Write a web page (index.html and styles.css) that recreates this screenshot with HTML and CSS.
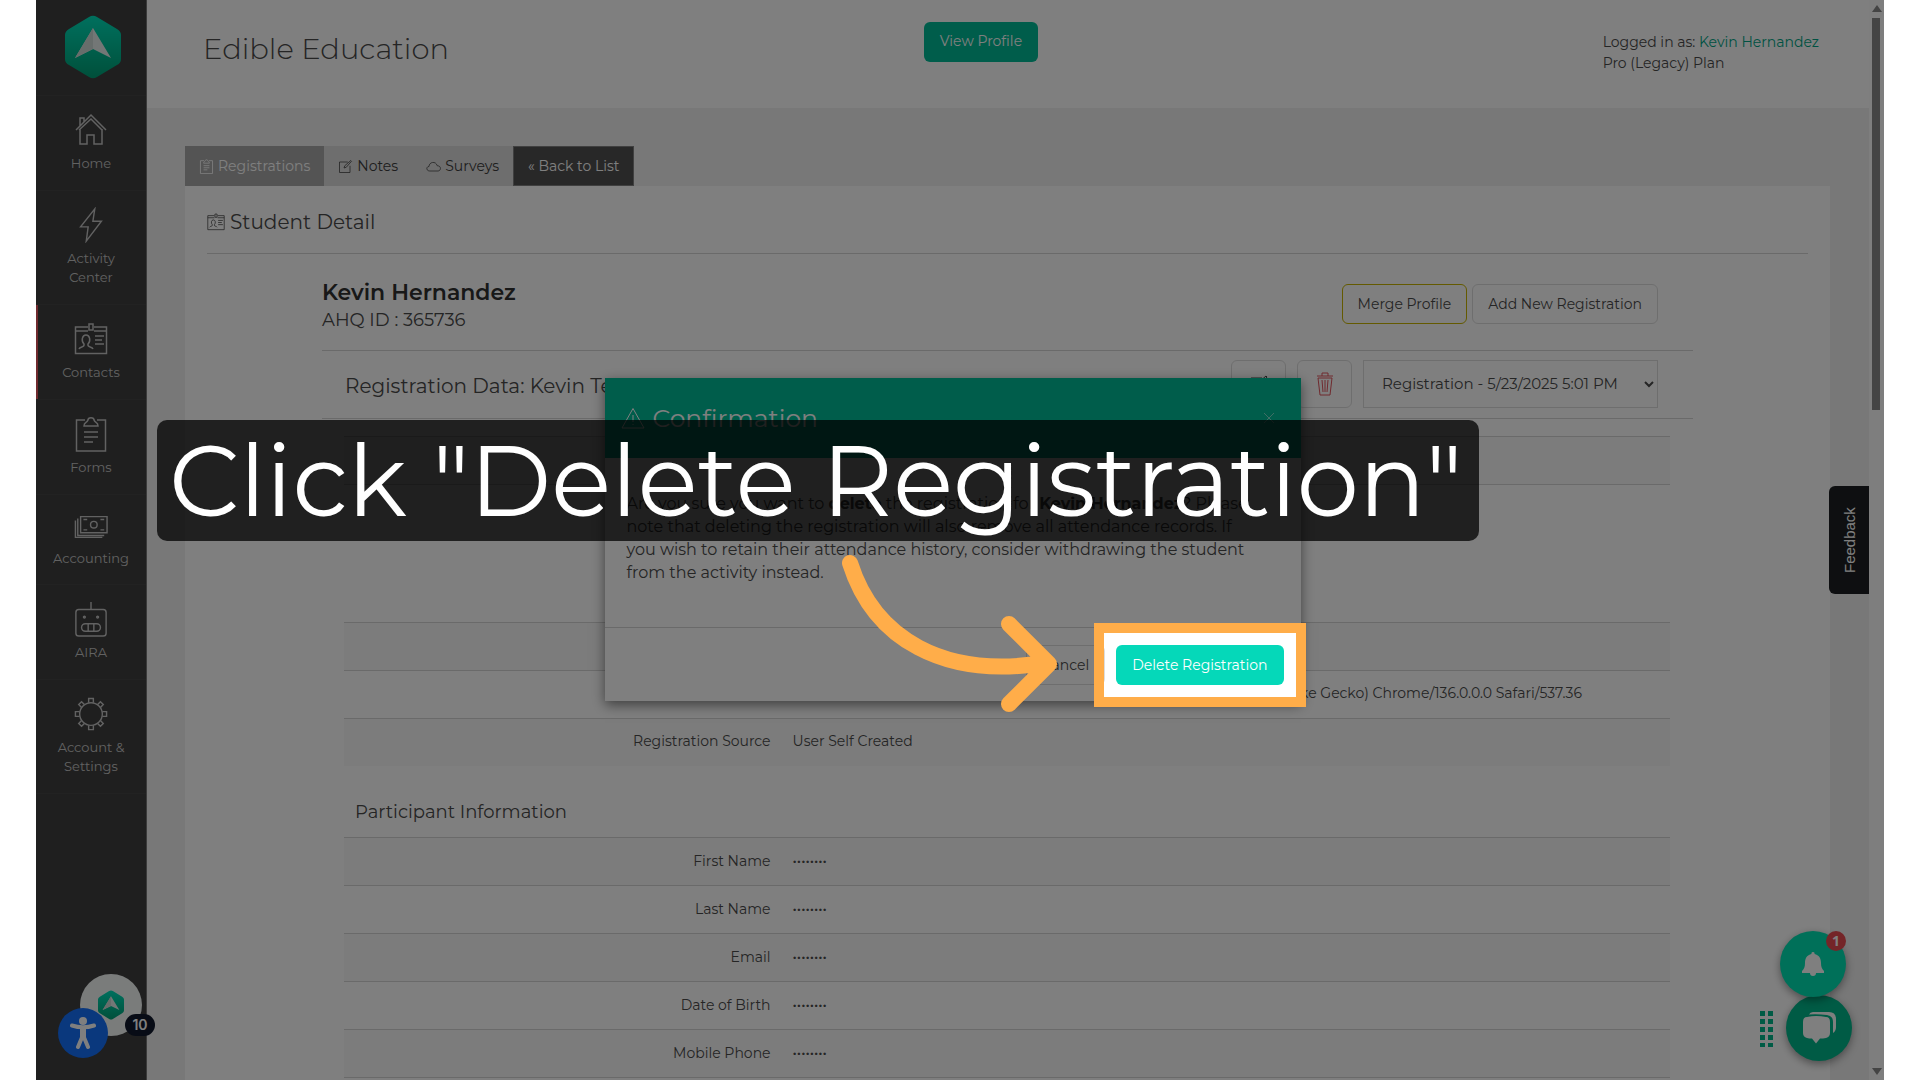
FILE: index.html
```html
<!DOCTYPE html>
<html lang="en">
<head>
    <meta charset="UTF-8">
    <meta name="viewport" content="width=device-width, initial-scale=1.0">
    <title>Edible Education - Student Detail</title>
    <link rel="stylesheet" href="styles.css">
</head>
<body>
<!-- Shared icons -->
<svg class="sprite" aria-hidden="true">
    <linearGradient id="logo-fill" x1="0" y1="0" x2="0" y2="1">
        <stop offset="0" stop-color="#00e0bc"/>
        <stop offset="1" stop-color="#00a076"/>
    </linearGradient>
    <symbol id="logo" viewBox="0 0 56 64">
        <path d="M24 2q4-2.500 8 0l20 12q4 2.500 4 6v24q0 4-4 6L32 62q-4 2.500-8 0L4 50q-4-2-4-6V20q0-3.500 4-6z" fill="url(#logo-fill)"/>
        <path d="M28 13 46 43 28 34 10 43z" fill="#e6efec"/>
        <path d="M28 13v21L10 43z" fill="#cfdad6"/>
    </symbol>
    <symbol id="clipboard" viewBox="0 0 32 36">
        <path d="M10 4H1.500v31h29V4H22M9 10c0-4 3-3 4-6 0-3 6-3 6 0 1 3 4 2 4 6zM9 16h14M9 21h14M9 26h9"/>
    </symbol>
    <symbol id="id-card" viewBox="0 0 34 32">
        <path d="M14 4H1.500v26.500h31V4H20M1.500 8H14M20 8h12.500M15 1h4v6h-4zM5 26c1-3 6-1 5-5-3-3-2-9 2-9s5 6 2 9c-1 4 4 2 5 5M21 13h9M21 17h7M21 21h9"/>
    </symbol>
    <symbol id="pencil" viewBox="0 0 20 20">
        <path d="M13 4H2v14h14V9M8 12l1-3 8-7 1 1-7 8z"/>
    </symbol>
</svg>

<div class="window">
    <nav class="sidebar">
        <a href="#" class="brand" aria-label="Home page"><svg><use href="#logo"/></svg></a>
        <a href="#" class="nav-item">
            <svg viewBox="0 0 34 34"><path d="M2 17 17 2l15 15M6 16v15h7V22h7v9h8V16M6 13V5h4v4M5 17 17 6l11 11"/></svg>
            <span>Home</span>
        </a>
        <a href="#" class="nav-item nav-tall">
            <svg viewBox="0 0 24 38"><path d="M16 2 1 21h8L7 36 23 15h-9z"/></svg>
            <span>Activity Center</span>
        </a>
        <a href="#" class="nav-item active">
            <svg><use href="#id-card"/></svg>
            <span>Contacts</span>
        </a>
        <a href="#" class="nav-item">
            <svg><use href="#clipboard"/></svg>
            <span>Forms</span>
        </a>
        <a href="#" class="nav-item nav-short">
            <svg viewBox="0 0 36 26"><path d="M7 2h28v17H7zM4 4v18h28M1.500 6v18H30M10 5h4M28 5h4M10 16h4M28 16h4"/><circle cx="21" cy="10.500" r="3.500"/></svg>
            <span>Accounting</span>
        </a>
        <a href="#" class="nav-item">
            <svg viewBox="0 0 36 38"><rect x="2" y="9" width="32" height="28" rx="3"/><rect x="8" y="24" width="20" height="8" rx="4"/><path d="M18 1v8M15 24v8M21 24v8"/><circle cx="11" cy="17" r="1"/><circle cx="25" cy="17" r="1"/></svg>
            <span>AIRA</span>
        </a>
        <a href="#" class="nav-item nav-tall">
            <svg viewBox="0 0 36 36"><circle cx="18" cy="18" r="12"/><path d="M15.500 6V1.500h5V6M15.500 30v4.500h5V30M6 15.500H1.500v5H6M30 15.500h4.500v5H30M8 11 5 8l3-3 3 3M25 8l3-3 3 3-3 3M8 25l-3 3 3 3 3-3M25 28l3 3 3-3-3-3"/></svg>
            <span>Account &amp; Settings</span>
        </a>
    </nav>

    <div class="page">
        <header class="topbar">
            <h1>Edible Education</h1>
            <a href="#" class="btn btn-green">View Profile</a>
            <p class="account">Logged in as: <a href="#">Kevin Hernandez</a><br>Pro (Legacy) Plan</p>
        </header>

        <main class="content">
            <div class="tabs">
                <a href="#" class="tab current"><svg><use href="#clipboard"/></svg>Registrations</a>
                <a href="#" class="tab"><svg><use href="#pencil"/></svg>Notes</a>
                <a href="#" class="tab"><svg viewBox="0 0 20 14"><path d="M5 13C0 13 0 7 4 7c0-6 9-8 11-1 6 0 5 7 1 7z"/></svg>Surveys</a>
                <a href="#" class="tab back">« Back to List</a>
            </div>
            <section class="panel">
                <h2 class="panel-title"><svg><use href="#id-card"/></svg>Student Detail</h2>

                <div class="student">
                    <div class="student-head">
                        <div>
                            <h3>Kevin Hernandez</h3>
                            <p>AHQ ID : 365736</p>
                        </div>
                        <div class="actions">
                            <button type="button" class="btn btn-outline btn-merge">Merge Profile</button>
                            <button type="button" class="btn btn-outline">Add New Registration</button>
                        </div>
                    </div>
                    <div class="registration-head">
                        <h4>Registration Data: Kevin Test default</h4>
                        <button type="button" class="icon-btn" aria-label="Edit"><svg><use href="#pencil"/></svg></button>
                        <button type="button" class="icon-btn trash" aria-label="Delete">
                            <svg viewBox="0 0 18 24"><path d="M1 4h16M6 4V1h6v3M2 6l2 17h10l2-17zM6 8l1 12M9 8v12M12 8l-1 12"/></svg>
                        </button>
                        <select aria-label="Registration"><option>Registration - 5/23/2025 5:01 PM</option></select>
                    </div>

                    <table class="data">
                        <tbody>
                            <tr><th></th><td></td></tr>
                            <tr><th></th><td></td></tr>
                        </tbody>
                    </table>
                    <table class="data data-registration">
                        <tbody>
                            <tr><th></th><td></td></tr>
                            <tr><th>User Agent</th><td>Mozilla/5.0 (Windows NT 10.0; Win64; x64) AppleWebKit/537.36 (KHTML, like Gecko) Chrome/136.0.0.0 Safari/537.36</td></tr>
                            <tr><th>Registration Source</th><td>User Self Created</td></tr>
                        </tbody>
                    </table>

                    <h5>Participant Information</h5>
                    <table class="data data-masked">
                        <tbody>
                            <tr><th>First Name</th><td>········</td></tr>
                            <tr><th>Last Name</th><td>········</td></tr>
                            <tr><th>Email</th><td>········</td></tr>
                            <tr><th>Date of Birth</th><td>········</td></tr>
                            <tr><th>Mobile Phone</th><td>········</td></tr>
                            <tr><th></th><td></td></tr>
                        </tbody>
                    </table>
                </div>
            </section>
        </main>
    </div>

    <div class="scrollbar" aria-hidden="true"></div>

    <!-- Floating widgets -->
    <button type="button" class="feedback">Feedback</button>
    <button type="button" class="help" aria-label="Updates"><svg><use href="#logo"/></svg></button>
    <span class="help-count">10</span>
    <button type="button" class="access" aria-label="Accessibility">
        <svg viewBox="0 0 26 34"><circle cx="13" cy="5" r="4"/><path d="M2 9.500Q13 13 24 9.500M13 12v9M13 19l-5 12M13 19l5 12"/><path class="torso" d="M10 12h6v10h-6z"/></svg>
    </button>
    <button type="button" class="round bell" aria-label="Notifications">
        <svg viewBox="0 0 22 24"><path d="M11 0a1.500 1.500 0 0 1 1.500 2C17 3 19 6 19 11c0 4 1 6 3 8v2h-8a3 3 0 0 1-6 0H0v-2c2-2 3-4 3-8 0-5 2-8 6.500-9A1.500 1.500 0 0 1 11 0z"/></svg>
        <span>1</span>
    </button>
    <svg class="grip" viewBox="0 0 13 36" aria-hidden="true"><path d="M2.500 0v36M10.500 0v36"/></svg>
    <button type="button" class="round chat" aria-label="Chat">
        <svg viewBox="0 0 34 34"><path d="M5 6q9-2 19 0 4 0 4 5v11q0 4-4 5-3 .5-6 .5l-4 5-4-5q-3 0-5-.5-4-1-4-5V11q0-5 4-5z"/><path d="M7 3.500Q8 1 11 1h16q7 0 7 7v8q0 4-3 6V11q0-6-6-7-9-1-18-.5z"/></svg>
    </button>

    <div class="modal" role="dialog" aria-labelledby="modal-title">
        <div class="modal-head">
            <svg viewBox="0 0 24 22"><path d="M12 1.500 23 21H1zM12 8v7M12 17v1"/></svg>
            <h2 id="modal-title">Confirmation</h2>
            <button type="button" class="close" aria-label="Close">
                <svg viewBox="0 0 12 12"><path d="m1 1 10 10M11 1 1 11"/></svg>
            </button>
        </div>
        <p class="modal-body">Are you sure you want to <b>delete</b> the registration for <b>Kevin Hernandez</b>? Please note that deleting the registration will also remove all attendance records. If you wish to retain their attendance history, consider withdrawing the student from the activity instead.</p>
        <div class="modal-foot">
            <button type="button" class="btn btn-outline">Cancel</button>
            <div class="spotlight">
                <button type="button" class="btn btn-delete">Delete Registration</button>
                <svg class="arrow" viewBox="0 0 220 160" aria-hidden="true"><path d="M12 16C36 92 106 132 206 116M171 77l40 40-40 40"/></svg>
            </div>
        </div>
    </div>

    <div class="callout">Click "Delete Registration"</div>
</div>
</body>
</html>
```
FILE: styles.css
```css
* {
    box-sizing: border-box;
}
body {
    margin: 0;
    padding: 0 36px;
    background-color: #ffffff;
    color: #4a4a4a;
    font-family: 'Montserrat', 'Inter', sans-serif;
    font-size: 14px;
}
h1, h2, h3, h4, h5, p {
    margin: 0;
    font-weight: 400;
}
a {
    color: inherit;
    text-decoration: none;
}
button, select {
    font: inherit;
    color: inherit;
    cursor: pointer;
}
svg {
    fill: none;
    stroke: currentColor;
    stroke-width: 1.5;
}
.sprite {
    position: absolute;
    width: 0;
    height: 0;
}
.window {
    position: relative;
    display: flex;
    height: 100vh;
    overflow: hidden;
    background-color: #f0f0f0;
}

/* Sidebar */
.sidebar {
    flex: 0 0 111px;
    background-color: #3e3e3e;
    border-right: 1px solid #777777;
    color: #c4c4c4;
}
.brand {
    display: block;
    height: 96px;
    padding: 15px 0 0 29px;
    border-bottom: 1px solid #454545;
}
.brand svg {
    width: 56px;
    height: 64px;
    stroke: none;
}
.nav-item {
    display: flex;
    flex-direction: column;
    align-items: center;
    gap: 6px;
    height: 95px;
    padding: 16px 16px 0;
    border-bottom: 1px solid #454545;
    font-size: 13px;
    line-height: 19px;
    text-align: center;
}
.nav-item svg {
    flex: none;
    width: 34px;
    height: 36px;
}
.nav-tall {
    height: 114px;
}
.nav-short {
    height: 90px;
}
.nav-short svg {
    height: 32px;
}
.active {
    box-shadow: inset 2px 0 #e0545c;
}

/* Top bar */
.page {
    flex: 1;
    min-width: 0;
}
.topbar {
    display: grid;
    grid-template-columns: 12fr auto 13fr;
    align-items: start;
    height: 108px;
    padding: 22px 50px 0 56px;
    background-color: #ffffff;
}
.topbar h1 {
    font-size: 29px;
    font-weight: 300;
    line-height: 54px;
}
.account {
    justify-self: end;
    padding-top: 10px;
    line-height: 21px;
}
.account a {
    color: #00a585;
}
.btn {
    height: 40px;
    padding: 0 15px;
    border: 1px solid transparent;
    border-radius: 6px;
    line-height: 36px;
    white-space: nowrap;
}
.btn-green {
    background-color: #00ba96;
    color: #ffffff;
}
.btn-outline {
    background-color: transparent;
    border-color: #dddddd;
}
.btn-merge {
    border-color: #c8b400;
}
.btn-delete {
    background-color: #05d8b9;
    color: #ffffff;
}

/* Content */
.content {
    padding: 38px 39px 0 38px;
}
.tabs {
    display: flex;
    height: 40px;
    color: #3c3c3c;
}
.tab {
    display: flex;
    align-items: center;
    gap: 4px;
    padding: 0 14px;
    background-color: #dddddd;
}
.tab svg {
    width: 15px;
    height: 15px;
    stroke-width: 1;
}
.current {
    background-color: #a9a9a9;
    color: #ffffff;
}
.current svg {
    stroke-width: 2;
}
.back {
    background-color: #505050;
    border: 1px solid #808080;
    color: #ffffff;
}
.panel {
    padding: 18px 22px 0;
    background-color: #ffffff;
}
.panel-title {
    display: flex;
    align-items: center;
    gap: 5px;
    height: 50px;
    padding-bottom: 14px;
    border-bottom: 1px solid #d5d5d5;
    font-size: 20px;
}
.panel-title svg {
    width: 18px;
    height: 18px;
}
.student {
    padding: 0 115px;
}
.student-head {
    display: flex;
    justify-content: space-between;
    height: 97px;
    padding: 25px 35px 0 0;
    border-bottom: 1px solid #d5d5d5;
}
.student-head h3 {
    font-size: 22px;
    font-weight: 600;
    line-height: 28px;
    color: #303030;
}
.student-head p {
    font-size: 18px;
    line-height: 26px;
}
.actions {
    display: flex;
    gap: 5px;
    padding-top: 5px;
}
.registration-head {
    display: flex;
    align-items: center;
    gap: 11px;
    height: 68px;
    padding: 0 35px 2px 23px;
    border-bottom: 1px solid #d5d5d5;
}
.registration-head h4 {
    flex: 1;
    padding-top: 4px;
    font-size: 20px;
}
.icon-btn {
    display: grid;
    place-items: center;
    width: 55px;
    height: 48px;
    background-color: transparent;
    border: 1px solid #dddddd;
    border-radius: 6px;
}
.icon-btn svg {
    width: 20px;
    height: 24px;
    stroke-width: 1;
}
.trash {
    color: #e0545c;
}
select {
    width: 295px;
    height: 48px;
    padding: 0 0 0 14px;
    background-color: #ffffff;
    border: 1px solid #dddddd;
    font-size: 15px;
}
.data {
    width: calc(100% - 45px);
    margin: 17px 23px 0 22px;
    border-collapse: collapse;
    table-layout: fixed;
}
.data tr {
    height: 48px;
    border-top: 1px solid #d5d5d5;
}
.data tr:nth-child(odd) {
    background-color: #f8f8f8;
}
.data th {
    width: 33%;
    padding: 0 11px 2px 0;
    font-weight: 400;
    text-align: right;
}
.data td {
    padding: 0 11px 2px;
    white-space: nowrap;
}
.data-registration {
    margin-top: 89px;
}
.data-masked td {
    font-size: 15px;
    font-weight: 600;
    line-height: 16px;
}
.student h5 {
    padding: 34px 0 0 33px;
    font-size: 18px;
    line-height: 24px;
}
.student h5 + .data {
    margin-top: 13px;
}

/* Scrollbar */
.scrollbar {
    display: flex;
    flex-direction: column;
    flex: 0 0 15px;
    align-items: center;
    justify-content: space-between;
    padding: 5px 0;
    background-color: #fcfcfc;
    background-image: linear-gradient(#888888, #888888);
    background-position: 3px 18px;
    background-size: 8px 392px;
    background-repeat: no-repeat;
}
.scrollbar::before, .scrollbar::after {
    content: '';
    border: 5px solid transparent;
    border-top: 0;
    border-bottom: 7px solid #888888;
}
.scrollbar::after {
    border-top: 7px solid #888888;
    border-bottom: 0;
}

/* Floating widgets */
.feedback {
    position: absolute;
    top: 486px;
    right: 15px;
    width: 40px;
    height: 108px;
    padding: 0;
    background-color: #1c1f22;
    border: 0;
    border-radius: 0 6px 6px 0;
    color: #ffffff;
    font-family: 'Liberation Sans', sans-serif;
    font-size: 15px;
    writing-mode: vertical-rl;
    transform: rotate(180deg);
}
.help, .access, .round {
    position: absolute;
    display: grid;
    place-items: center;
    padding: 0;
    border: 0;
    border-radius: 50%;
}
.help {
    left: 44px;
    bottom: 44px;
    width: 62px;
    height: 62px;
    background-color: #f4f8f7;
}
.help svg {
    width: 26px;
    height: 30px;
    stroke: none;
}
.help-count {
    position: absolute;
    left: 89px;
    bottom: 44px;
    width: 30px;
    height: 22px;
    background-color: #10182c;
    border-radius: 11px;
    color: #ffffff;
    font-family: 'Inter', sans-serif;
    font-size: 14px;
    font-weight: 600;
    line-height: 22px;
    text-align: center;
}
.access {
    left: 22px;
    bottom: 22px;
    width: 50px;
    height: 50px;
    background-color: #1470fa;
    color: #ffffff;
}
.access svg {
    width: 26px;
    height: 34px;
    fill: currentColor;
    stroke-width: 4;
    stroke-linecap: round;
}
.access circle, .torso {
    stroke: none;
}
.access path:not(.torso) {
    fill: none;
}
.round {
    width: 66px;
    height: 66px;
    color: #ffffff;
    box-shadow: 0 3px 8px rgba(0, 0, 0, 0.4);
}
.round svg {
    fill: currentColor;
    stroke: none;
}
.bell {
    right: 38px;
    bottom: 83px;
    z-index: 1;
    background-color: #00e0b2;
}
.bell svg {
    width: 22px;
    height: 24px;
}
.bell span {
    position: absolute;
    top: 0;
    right: 0;
    width: 20px;
    height: 20px;
    background-color: #e84a50;
    border-radius: 50%;
    font-family: 'Open Sans', sans-serif;
    font-weight: 700;
    line-height: 20px;
}
.chat {
    right: 32px;
    bottom: 19px;
    background-color: #00b68a;
}
.chat svg {
    width: 34px;
    height: 34px;
}
.grip {
    position: absolute;
    right: 111px;
    bottom: 33px;
    width: 13px;
    height: 36px;
    color: #00b68a;
    stroke-width: 5;
    stroke-dasharray: 5 3;
}

/* Confirmation dialog */
.modal {
    position: absolute;
    top: 378px;
    left: 0;
    right: 15px;
    z-index: 2;
    width: 696px;
    margin: 0 auto;
    background-color: #ffffff;
    box-shadow: 0 4px 12px rgba(0, 0, 0, 0.5);
}
.modal-head {
    display: flex;
    align-items: center;
    gap: 8px;
    height: 80px;
    padding: 0 26px 0 16px;
    background-color: #00ba96;
    color: #ffffff;
}
.modal-head svg {
    width: 24px;
    height: 22px;
    stroke-width: 1;
}
.modal-head h2 {
    flex: 1;
    font-size: 25px;
}
.close {
    display: grid;
    padding: 0;
    background-color: transparent;
    border: 0;
    opacity: 0.5;
}
.close svg {
    width: 12px;
    height: 12px;
}
.modal-body {
    height: 170px;
    padding: 34px 42px 0 22px;
    border-bottom: 1px solid #d5d5d5;
    font-size: 16px;
    line-height: 23px;
}
.modal-foot {
    display: flex;
    justify-content: flex-end;
    gap: 11px;
    padding: 17px 17px 16px;
}

/* Tour step: dims the window around the highlighted button */
.spotlight {
    position: relative;
    z-index: 1;
}
.spotlight::after {
    content: '';
    position: absolute;
    inset: -22px;
    border: 10px solid #ffad49;
    box-shadow: 0 0 0 3000px rgba(0, 0, 0, 0.5);
    pointer-events: none;
}
.arrow {
    position: absolute;
    z-index: 1;
    top: -98px;
    right: 226px;
    width: 220px;
    height: 160px;
    overflow: visible;
    color: #ffad49;
    stroke-width: 16;
    stroke-linecap: round;
    stroke-linejoin: round;
}
.callout {
    position: absolute;
    top: 420px;
    left: 121px;
    z-index: 3;
    padding: 0 16px 0 12px;
    background-color: rgba(0, 0, 0, 0.75);
    border-radius: 10px;
    color: #ffffff;
    font-size: 99px;
    line-height: 121px;
    white-space: nowrap;
}
```
